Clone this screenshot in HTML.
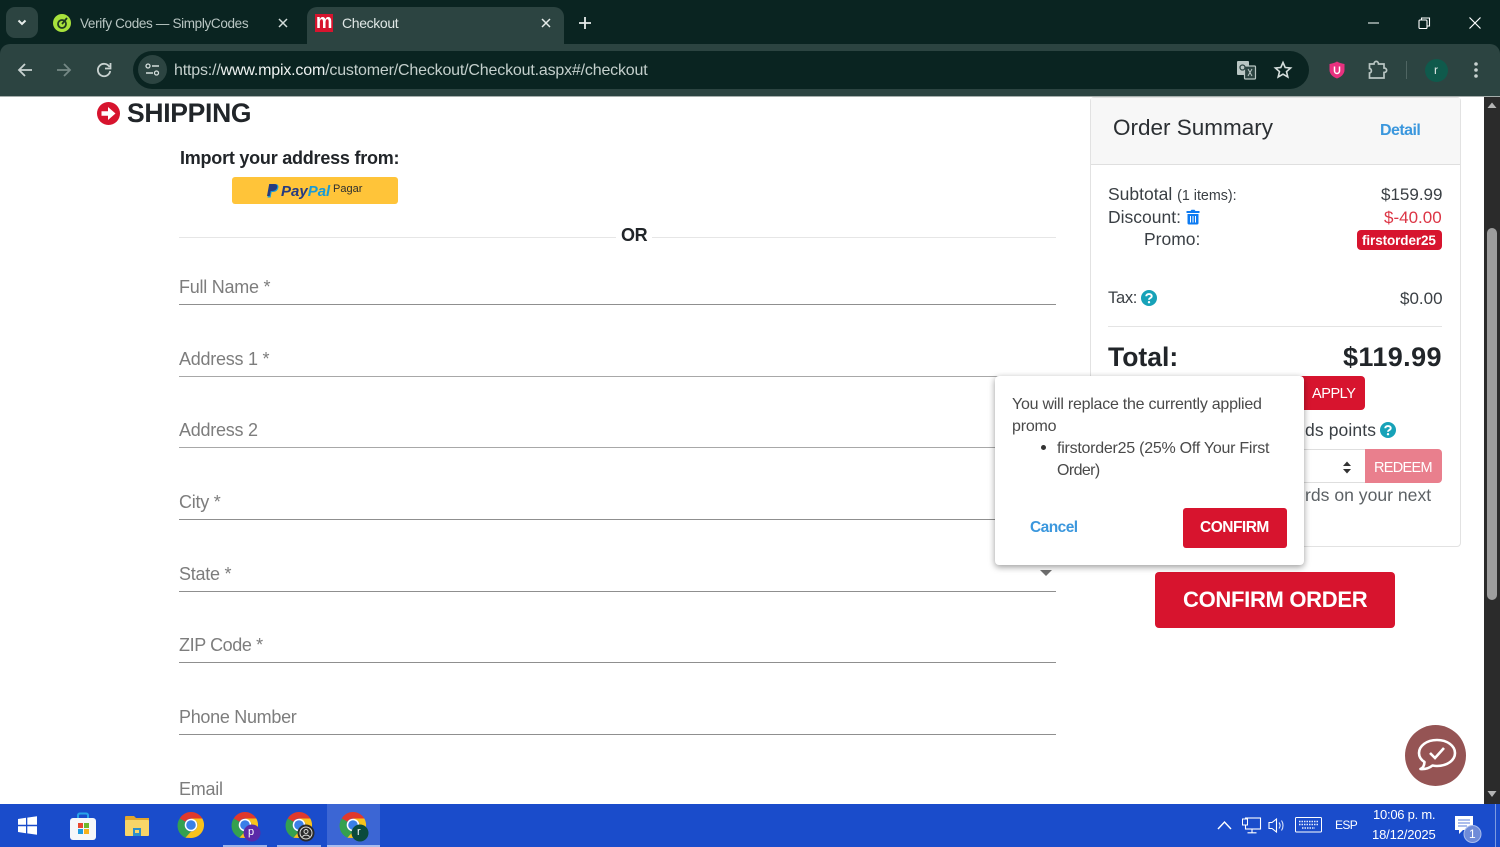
<!DOCTYPE html>
<html lang="en"><head><meta charset="utf-8"><title>Checkout</title>
<style>
html,body{margin:0;padding:0;width:1500px;height:847px;overflow:hidden;background:#fff;font-family:"Liberation Sans",sans-serif}
.t{position:absolute;white-space:nowrap;line-height:1}
.b{position:absolute}
svg{position:absolute;overflow:visible}
.lab{color:#7d7d7d;font-size:18px;left:179px;letter-spacing:-.25px}
.line{position:absolute;left:179px;width:877px;height:1px;background:#8f8f8f}
.s{color:#3a3f44;font-size:17.5px}
.n{color:#3a3f44;font-size:17px}
</style></head><body>

<!-- browser chrome -->
<div class="b" style="left:0;top:0;width:1500px;height:96px;background:#0a2421"></div>
<div class="b" style="left:0;top:44px;width:1500px;height:52px;background:#2c4441;border-radius:10px 10px 0 0"></div>
<div class="b" style="left:0;top:96px;width:1500px;height:1px;background:#a6aeac"></div>
<div class="b" style="left:6px;top:7px;width:32px;height:31px;background:#2c4441;border-radius:9px"></div>
<svg style="left:0;top:0" width="40" height="40"><path d="M18.500 20.500 L22 24 L25.500 20.500" fill="none" stroke="#e6ecea" stroke-width="2"/></svg>
<svg style="left:53px;top:14px" width="18" height="18"><circle cx="9" cy="9" r="9" fill="#a8e23c"/><circle cx="9" cy="10" r="4" fill="none" stroke="#1f3a20" stroke-width="1.800"/><path d="M9 10 L14 4" stroke="#1f3a20" stroke-width="1.800"/></svg>
<div class="t" style="left:80px;top:17px;font-size:13.500px;color:#b9c6c3;letter-spacing:-.34px">Verify Codes — SimplyCodes</div>
<svg style="left:278px;top:18px" width="10" height="10"><path d="M1 1 L9 9 M9 1 L1 9" stroke="#d3dcda" stroke-width="1.500"/></svg>
<!-- active tab -->
<div class="b" style="left:307px;top:7px;width:257px;height:38px;background:#2c4441;border-radius:10px 10px 0 0"></div>
<div class="b" style="left:315px;top:14px;width:18px;height:18px;background:#d7142e"></div>
<div class="t" style="left:316px;top:12px;font-size:20px;font-weight:bold;color:#fff;transform:scaleX(.92);transform-origin:left">m</div>
<div class="t" style="left:342px;top:16px;font-size:14px;color:#dfe7e5;letter-spacing:-.35px">Checkout</div>
<svg style="left:541px;top:18px" width="10" height="10"><path d="M1 1 L9 9 M9 1 L1 9" stroke="#e6ecea" stroke-width="1.500"/></svg>
<svg style="left:578px;top:16px" width="14" height="14"><path d="M7 1 V13 M1 7 H13" stroke="#e6ecea" stroke-width="1.800"/></svg>
<!-- window controls -->
<svg style="left:1368px;top:18px" width="12" height="10"><path d="M0 5 H11" stroke="#d5dedc" stroke-width="1.200"/></svg>
<svg style="left:1418px;top:17px" width="13" height="13"><rect x="1" y="3" width="8" height="8.500" rx="1" fill="none" stroke="#fff" stroke-width="1.100"/><path d="M3.500 3 V1 H11.500 V9 H9" fill="none" stroke="#fff" stroke-width="1.100"/></svg>
<svg style="left:1469px;top:17px" width="12" height="12"><path d="M.5 .5 L11.500 11.500 M11.500 .5 L.5 11.500" stroke="#fff" stroke-width="1.200"/></svg>
<!-- toolbar -->
<svg style="left:17px;top:62px" width="16" height="16"><path d="M15 8 H2 M8 2 L2 8 L8 14" fill="none" stroke="#c8d2d0" stroke-width="1.800"/></svg>
<svg style="left:56px;top:62px" width="16" height="16"><path d="M1 8 H14 M8 2 L14 8 L8 14" fill="none" stroke="#758885" stroke-width="1.800"/></svg>
<svg style="left:96px;top:62px" width="16" height="16"><path d="M13.500 5 A6.200 6.200 0 1 0 14.200 9" fill="none" stroke="#c8d2d0" stroke-width="1.800"/><path d="M14.500 1 V6.500 H9" fill="none" stroke="#c8d2d0" stroke-width="1.800"/></svg>
<div class="b" style="left:133px;top:51px;width:1176px;height:38px;background:#0a2421;border-radius:19px"></div>
<div class="b" style="left:138px;top:55px;width:29px;height:29px;background:#2c4441;border-radius:50%"></div>
<svg style="left:145px;top:63px" width="15" height="14"><circle cx="3" cy="3" r="2" fill="none" stroke="#d5dedc" stroke-width="1.300"/><path d="M7 3 H14 M1 10 H8" stroke="#d5dedc" stroke-width="1.500"/><circle cx="11.500" cy="10" r="2" fill="none" stroke="#d5dedc" stroke-width="1.300"/></svg>
<div class="t" style="left:174px;top:63px;font-size:16px;color:#d5dedc;letter-spacing:-.18px"><span style="color:#c4cfcc">https://</span><span style="color:#eef2f1">www.mpix.com</span><span style="color:#c4cfcc">/customer/Checkout/Checkout.aspx#/checkout</span></div>
<svg style="left:1237px;top:60px" width="20" height="20"><rect x="0" y="1" width="12" height="14" rx="1" fill="#b9c6c3"/><rect x="7.500" y="6" width="11" height="13" rx="1" fill="#2c4441" stroke="#b9c6c3" stroke-width="1.200"/><path d="M11 9 L15 16 M15 9 L11 16" stroke="#b9c6c3" stroke-width="1"/><circle cx="5.500" cy="7.500" r="2.500" fill="none" stroke="#2c4441" stroke-width="1.300"/></svg>
<svg style="left:1274px;top:61px" width="18" height="18"><path d="M9 1.500 L11.200 6.500 L16.600 7 L12.500 10.600 L13.800 16 L9 13.200 L4.200 16 L5.500 10.600 L1.400 7 L6.800 6.500 Z" fill="none" stroke="#d5dedc" stroke-width="1.600"/></svg>
<svg style="left:1329px;top:61px" width="16" height="18"><path d="M8 .5 C10.500 2 13 2.500 15.500 3 V9 C15.500 13 12 16 8 17.500 C4 16 .5 13 .5 9 V3 C3 2.500 5.500 2 8 .5Z" fill="#e8317f"/><path d="M5.500 5.500 V10 A2.500 2.500 0 0 0 10.500 10 V5.500" fill="none" stroke="#fff" stroke-width="1.500"/></svg>
<svg style="left:1368px;top:60px" width="20" height="20"><path d="M1.500 4 H6 C6 .5 10.500 .5 10.500 4 H16 V8 C19.500 8 19.500 12.500 16 12.500 V18 H1.500 V13 C4 13 4 8.500 1.500 8.500Z" fill="none" stroke="#b9c6c3" stroke-width="1.700"/></svg>
<div class="b" style="left:1406px;top:61px;width:1px;height:18px;background:#4f6562"></div>
<div class="b" style="left:1425px;top:59px;width:23px;height:23px;border-radius:50%;background:#0f5a4c"></div>
<div class="t" style="left:1434px;top:64px;font-size:12px;color:#e6ecea">r</div>
<svg style="left:1474px;top:61px" width="4" height="18"><circle cx="2" cy="3" r="1.800" fill="#c8d2d0"/><circle cx="2" cy="9" r="1.800" fill="#c8d2d0"/><circle cx="2" cy="15" r="1.800" fill="#c8d2d0"/></svg>

<!-- page left -->
<svg style="left:97px;top:102px" width="23" height="23"><circle cx="11.500" cy="11.500" r="11.500" fill="#d7142e"/><path d="M4.500 9.300 H11 V5 L18.500 11.500 L11 18 V13.700 H4.500Z" fill="#fff"/></svg>
<div class="t" style="left:127px;top:100px;font-size:26.500px;font-weight:bold;color:#212529;letter-spacing:-.3px">SHIPPING</div>
<div class="t" style="left:180px;top:149px;font-size:18px;font-weight:bold;color:#212529;letter-spacing:-.23px">Import your address from:</div>
<div class="b" style="left:232px;top:177px;width:166px;height:27px;background:#ffc439;border-radius:3px"></div>
<svg style="left:267px;top:184px" width="12" height="14"><path d="M3 0 H8 C11.500 0 12 2.500 11 4.800 C10 7.300 8 8 6 8 H4.600 L3.600 13.500 H.5Z" fill="#179bd7"/><path d="M2.200 0 H7 C10.300 0 10.800 2.300 9.900 4.300 C9 6.400 7 7 5 7 H3.700 L2.700 12 H0Z" fill="#253b80"/></svg>
<div class="t" style="left:281px;top:184px;font-size:15px;font-weight:bold;font-style:italic;color:#253b80">Pay<span style="color:#179bd7">Pal</span></div>
<div class="t" style="left:333px;top:184px;font-size:11px;color:#2c2e2f">Pagar</div>
<div class="b" style="left:179px;top:237px;width:877px;height:1px;background:#e6e6e6"></div>
<div class="b" style="left:616px;top:225px;width:36px;height:20px;background:#fff"></div>
<div class="t" style="left:621px;top:226px;font-size:18px;font-weight:bold;color:#212529;letter-spacing:-.4px">OR</div>

<div class="t lab" style="top:278px">Full Name *</div><div class="line" style="top:304px"></div>
<div class="t lab" style="top:350px">Address 1 *</div><div class="line" style="top:376px;background:#a8a8a8"></div>
<div class="t lab" style="top:421px">Address 2</div><div class="line" style="top:447px;background:#a8a8a8"></div>
<div class="t lab" style="top:493px">City *</div><div class="line" style="top:519px"></div>
<div class="t lab" style="top:565px">State *</div><div class="line" style="top:591px"></div>
<svg style="left:1040px;top:570px" width="12" height="7"><path d="M0 0 H12 L6 6Z" fill="#6f6f6f"/></svg>
<div class="t lab" style="top:636px;letter-spacing:-.4px">ZIP Code *</div><div class="line" style="top:662px"></div>
<div class="t lab" style="top:708px;letter-spacing:-.3px">Phone Number</div><div class="line" style="top:734px"></div>
<div class="t lab" style="top:780px">Email</div>

<!-- order summary -->
<div class="b" style="left:1090px;top:97px;width:369px;height:448px;border:1px solid #e2e2e2;border-radius:4px;box-sizing:content-box"></div>
<div class="b" style="left:1091px;top:98px;width:369px;height:66px;background:#f7f7f7;border-bottom:1px solid #dfdfdf"></div>
<div class="t" style="left:1113px;top:117px;font-size:22.500px;color:#2b2f33;letter-spacing:0">Order Summary</div>
<div class="t" style="left:1380px;top:123px;font-size:16px;font-weight:bold;color:#3b97dd;letter-spacing:-.55px">Detail</div>
<div class="t s" style="left:1108px;top:186px">Subtotal <span style="font-size:14.300px">(1 items):</span></div>
<div class="t n" style="left:1381px;top:186px">$159.99</div>
<div class="t s" style="left:1108px;top:209px">Discount:</div>
<svg style="left:1186px;top:209px" width="14" height="16"><path d="M1.500 5 H12.500 V14 A1.500 1.500 0 0 1 11 15.500 H3 A1.500 1.500 0 0 1 1.500 14Z M0.500 2 H4.500 L5.500 .7 H8.500 L9.500 2 H13.500 V4 H.5Z" fill="#0d7bf2"/><path d="M4.500 7 V13.500 M7 7 V13.500 M9.500 7 V13.500" stroke="#fff" stroke-width="1"/></svg>
<div class="t" style="left:1384px;top:209px;font-size:17px;color:#dc3545">$-40.00</div>
<div class="t s" style="left:1144px;top:231px">Promo:</div>
<div class="b" style="left:1357px;top:230px;width:85px;height:20px;background:#d7142e;border-radius:4px"></div>
<div class="t" style="left:1362px;top:234px;font-size:13.500px;font-weight:bold;color:#fff;letter-spacing:-.1px">firstorder25</div>
<div class="t" style="left:1108px;top:290px;font-size:16.500px;color:#3a3f44;letter-spacing:-.3px">Tax:</div>
<svg style="left:1141px;top:290px" width="16" height="16"><circle cx="8" cy="8" r="8" fill="#17a2b8"/><path d="M5.300 6.200 C5.300 3.300 10.700 3.300 10.700 6.200 C10.700 8 8 8 8 9.800" fill="none" stroke="#fff" stroke-width="1.900"/><circle cx="8" cy="12.200" r="1.200" fill="#fff"/></svg>
<div class="t n" style="left:1400px;top:290px">$0.00</div>
<div class="b" style="left:1108px;top:326px;width:334px;height:1px;background:#e4e4e4"></div>
<div class="t" style="left:1108px;top:344px;font-size:26.500px;font-weight:bold;color:#212529">Total:</div>
<div class="t" style="left:1343px;top:344px;font-size:27px;font-weight:bold;color:#212529;letter-spacing:.4px">$119.99</div>

<div class="b" style="left:1300px;top:376px;width:65px;height:34px;background:#d7142e;border-radius:0 4px 4px 0"></div>
<div class="t" style="left:1312px;top:387px;font-size:14.500px;color:#fff;letter-spacing:-.45px">APPLY</div>
<div class="t n" style="left:1305px;top:422px;letter-spacing:.12px;font-size:17.500px">ds points</div>
<svg style="left:1380px;top:422px" width="16" height="16"><circle cx="8" cy="8" r="8" fill="#17a2b8"/><path d="M5.300 6.200 C5.300 3.300 10.700 3.300 10.700 6.200 C10.700 8 8 8 8 9.800" fill="none" stroke="#fff" stroke-width="1.900"/><circle cx="8" cy="12.200" r="1.200" fill="#fff"/></svg>
<div class="b" style="left:1300px;top:449px;width:65px;height:34px;border-top:1px solid #dedede;border-bottom:1px solid #dedede;box-sizing:border-box"></div>
<svg style="left:1342px;top:461px" width="10" height="13"><path d="M1 5 L5 .5 L9 5Z M1 8 L5 12.500 L9 8Z" fill="#333"/></svg>
<div class="b" style="left:1365px;top:449px;width:77px;height:34px;background:#e97f8d;border-radius:0 4px 4px 0"></div>
<div class="t" style="left:1374px;top:461px;font-size:14.500px;color:#fff;letter-spacing:-.7px">REDEEM</div>
<div class="t" style="left:1305px;top:487px;font-size:17.600px;color:#5c6165">rds on your next</div>

<div class="b" style="left:1155px;top:572px;width:240px;height:56px;background:#d7142e;border-radius:4px"></div>
<div class="t" style="left:1183px;top:589px;font-size:22px;font-weight:bold;color:#fff;letter-spacing:-.3px">CONFIRM ORDER</div>

<!-- popover -->
<div class="b" style="left:995px;top:376px;width:309px;height:189px;background:#fff;border-radius:4px;box-shadow:0 2px 7px rgba(0,0,0,.4)"></div>
<div class="t" style="left:1012px;top:397px;font-size:16px;color:#4a4a4a;letter-spacing:-.25px">You will replace the currently applied</div>
<div class="t" style="left:1012px;top:419px;font-size:16px;color:#4a4a4a;letter-spacing:-.2px">promo</div>
<div class="b" style="left:1041px;top:445px;width:5px;height:5px;border-radius:50%;background:#333"></div>
<div class="t" style="left:1057px;top:441px;font-size:16px;color:#4a4a4a;letter-spacing:-.25px">firstorder25 (25% Off Your First</div>
<div class="t" style="left:1057px;top:463px;font-size:16px;color:#4a4a4a;letter-spacing:-.6px">Order)</div>
<div class="t" style="left:1030px;top:520px;font-size:15.500px;font-weight:bold;color:#3b97dd;letter-spacing:-.55px">Cancel</div>
<div class="b" style="left:1183px;top:508px;width:104px;height:40px;background:#d7142e;border-radius:3px"></div>
<div class="t" style="left:1200px;top:520px;font-size:15.500px;font-weight:bold;color:#fff;letter-spacing:-.5px">CONFIRM</div>

<!-- chat -->
<div class="b" style="left:1405px;top:725px;width:61px;height:61px;border-radius:50%;background:#955454"></div>
<svg style="left:1417px;top:738px" width="40" height="34"><path d="M20 2 C9.500 2 2 8 2 15 C2 19 4.300 22 7.500 24 C7.300 27 6 30 3.500 31 C9 31.500 13 29.500 15.500 27.500 C17 27.800 18.500 28 20 28 C30.500 28 38 22 38 15 C38 8 30.500 2 20 2Z" fill="none" stroke="#fff" stroke-width="2.600" stroke-linejoin="round"/><path d="M13 15 L18 20 L27 10" fill="none" stroke="#fff" stroke-width="2.600"/></svg>

<!-- scrollbar -->
<div class="b" style="left:1484px;top:97px;width:16px;height:707px;background:#2b2b2b"></div>
<svg style="left:1484px;top:97px" width="16" height="707"><path d="M3.500 11 L8 5.500 L12.500 11Z" fill="#b5b5b5"/><path d="M3.500 694 L8 700 L12.500 694Z" fill="#b5b5b5"/></svg>
<div class="b" style="left:1487px;top:228px;width:10px;height:372px;background:#9d9d9d;border-radius:5px"></div>

<!-- taskbar -->
<div class="b" style="left:0;top:804px;width:1500px;height:43px;background:#1a4ccb"></div>
<div class="b" style="left:327px;top:804px;width:53px;height:43px;background:#3c66d4"></div>
<div class="b" style="left:223px;top:845px;width:44px;height:2px;background:#9db4ea"></div>
<div class="b" style="left:277px;top:845px;width:44px;height:2px;background:#9db4ea"></div>
<div class="b" style="left:327px;top:845px;width:53px;height:2px;background:#a9bdee"></div>
<svg style="left:18px;top:816px" width="19" height="19"><path d="M0 3 L8 1.800 V8.800 H0Z M9.300 1.600 L19 .2 V8.800 H9.300Z M0 10.200 H8 V17.200 L0 16Z M9.300 10.200 H19 V18.800 L9.300 17.400Z" fill="#fff"/></svg>
<svg style="left:70px;top:812px" width="26" height="28"><path d="M8 7 V3 A2 2 0 0 1 10 1.500 H16 A2 2 0 0 1 18 3 V7" fill="none" stroke="#29a3e8" stroke-width="2"/><rect x="0" y="6" width="26" height="22" rx="3" fill="#f5f7fa"/><rect x="8" y="11" width="5" height="5" fill="#e8472f"/><rect x="14" y="11" width="5" height="5" fill="#6fb82c"/><rect x="8" y="17" width="5" height="5" fill="#1f9be0"/><rect x="14" y="17" width="5" height="5" fill="#f7b21b"/></svg>
<svg style="left:125px;top:815px" width="24" height="21"><path d="M0 2 A1 1 0 0 1 1 1 H9 L11 3 H24 V8 H0Z" fill="#e2a62a"/><rect y="5" width="24" height="16" rx="1" fill="#f8d568"/><rect x="8" y="13" width="8" height="8" fill="#2f8fc9"/><rect x="10" y="15" width="4" height="3" fill="#f8d568"/></svg>

<svg width="0" height="0" style="position:absolute"><defs><g id="cr"><path d="M13 0 A13 13 0 0 1 24.300 6.500 L13 6.500 A6.500 6.500 0 0 0 7.400 9.800 L1.700 6.500 A13 13 0 0 1 13 0Z" fill="#e0392c"/><path d="M1.700 6.500 L7.400 9.800 A6.500 6.500 0 0 0 13 19.500 L7.400 25.700 A13 13 0 0 1 1.700 6.500Z" fill="#34a14f"/><path d="M24.300 6.500 A13 13 0 0 1 13 26 L7.400 25.700 L13 19.500 A6.500 6.500 0 0 0 18.600 9.800 L13 6.500Z" fill="#f8c21c"/><circle cx="13" cy="13" r="6.300" fill="#fff"/><circle cx="13" cy="13" r="4.800" fill="#3a7fe8"/></g></defs></svg>
<svg style="left:178px;top:812px" width="27" height="27"><use href="#cr"/></svg>
<svg style="left:232px;top:812px" width="27" height="27"><use href="#cr"/><circle cx="20" cy="21" r="8.500" fill="#5a2aa8"/></svg>
<div class="t" style="left:248px;top:827px;font-size:11px;color:#fff">p</div>
<svg style="left:286px;top:812px" width="27" height="27"><use href="#cr"/><circle cx="20" cy="21" r="8.500" fill="#2a2a2a"/><circle cx="20" cy="21" r="6" fill="none" stroke="#ddd" stroke-width="1"/><circle cx="20" cy="19.500" r="2" fill="none" stroke="#ddd" stroke-width="1"/><path d="M16.500 25 C17.500 22.500 22.500 22.500 23.500 25" fill="none" stroke="#ddd" stroke-width="1"/></svg>
<svg style="left:340px;top:812px" width="27" height="27"><use href="#cr"/><circle cx="20" cy="21" r="8.500" fill="#0a4a3c"/></svg>
<div class="t" style="left:357px;top:827px;font-size:11px;color:#fff">r</div>

<svg style="left:1217px;top:820px" width="15" height="10"><path d="M1 9 L7.500 2 L14 9" fill="none" stroke="#fff" stroke-width="1.400"/></svg>
<svg style="left:1242px;top:817px" width="19" height="17"><rect x="3.500" y="1" width="15" height="11" fill="none" stroke="#fff" stroke-width="1.100"/><path d="M10 12 V15.500 M5.500 15.800 H14.500" stroke="#fff" stroke-width="1.100"/><rect x=".5" y="2" width="5" height="6" fill="#1a4ccb" stroke="#fff" stroke-width="1"/></svg>
<svg style="left:1268px;top:817px" width="18" height="17"><path d="M1 5.500 H4 L8.500 2 V15 L4 11.500 H1Z" fill="none" stroke="#fff" stroke-width="1.100"/><path d="M11 5.500 C12.500 7.500 12.500 9.500 11 11.500 M13.500 3.500 C15.500 6.500 15.500 10.500 13.500 13.500" fill="none" stroke="#dbe4fa" stroke-width="1.100"/></svg>
<svg style="left:1295px;top:817px" width="27" height="16"><rect x=".5" y=".5" width="26" height="14.500" rx="1" fill="none" stroke="#fff" stroke-width="1"/><path d="M4 4.500 H23 M4 7.500 H23 M7 11 H20" stroke="#e6ecfb" stroke-width="1.400" stroke-dasharray="1.500 1"/></svg>
<div class="t" style="left:1335px;top:819px;font-size:12px;color:#fff;letter-spacing:-.6px">ESP</div>
<div class="t" style="left:1373px;top:808px;font-size:13px;color:#fff;letter-spacing:-.25px">10:06 p. m.</div>
<div class="t" style="left:1372px;top:828px;font-size:13px;color:#fff;letter-spacing:-.15px">18/12/2025</div>
<svg style="left:1455px;top:816px" width="28" height="27"><path d="M0 0 H18 V14 H8 L4 18 V14 H0Z" fill="#fff"/><path d="M3 4 H15 M3 7 H15 M3 10 H12" stroke="#5a7ddb" stroke-width="1"/><circle cx="17.500" cy="18" r="8.500" fill="#6f8bd8" stroke="#a9bdee" stroke-width="1"/></svg>
<div class="t" style="left:1469px;top:828px;font-size:12px;color:#fff">1</div>
<div class="b" style="left:1495px;top:804px;width:1px;height:43px;background:#7d9ae0"></div>
</body></html>
